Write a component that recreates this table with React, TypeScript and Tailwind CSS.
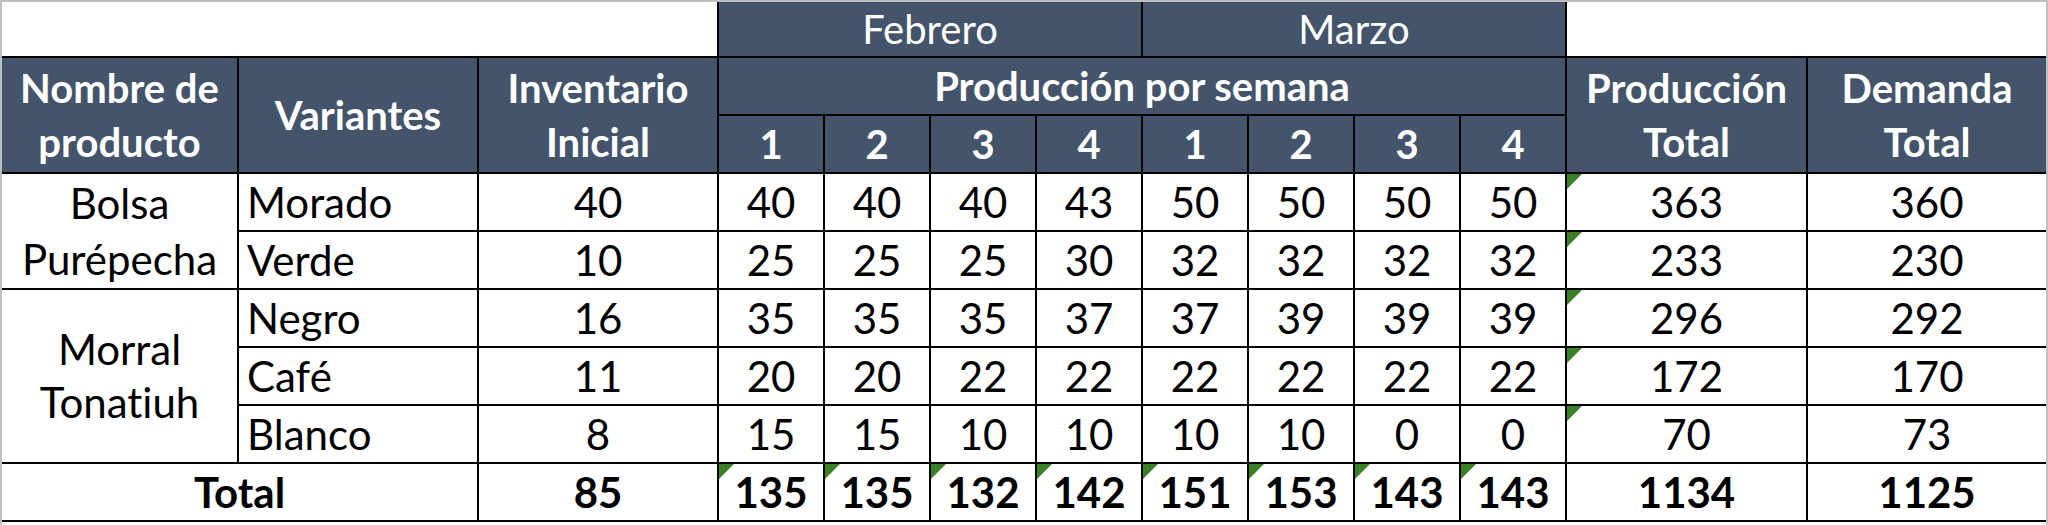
import type { ReactNode } from "react";

type Row = {
  variant: string;
  inv: number;
  weeks: number[];
  prod: number;
  demand: number;
};

const bolsa: Row[] = [
  { variant: "Morado", inv: 40, weeks: [40, 40, 40, 43, 50, 50, 50, 50], prod: 363, demand: 360 },
  { variant: "Verde", inv: 10, weeks: [25, 25, 25, 30, 32, 32, 32, 32], prod: 233, demand: 230 },
];

const morral: Row[] = [
  { variant: "Negro", inv: 16, weeks: [35, 35, 35, 37, 37, 39, 39, 39], prod: 296, demand: 292 },
  { variant: "Café", inv: 11, weeks: [20, 20, 22, 22, 22, 22, 22, 22], prod: 172, demand: 170 },
  { variant: "Blanco", inv: 8, weeks: [15, 15, 10, 10, 10, 10, 0, 0], prod: 70, demand: 73 },
];

const weekTotals = [135, 135, 132, 142, 151, 153, 143, 143];

function Flag() {
  return (
    <svg className="absolute left-0 top-0" width="15" height="15" viewBox="0 0 15 15">
      <polygon points="0,0 15,0 0,15" fill="#3b7f26" />
    </svg>
  );
}

function Head({ children, className = "" }: { children: ReactNode; className?: string }) {
  return (
    <div className={`flex items-center justify-center bg-[#44546a] text-center text-[40px] font-bold leading-[54px] text-white ${className}`}>
      {children}
    </div>
  );
}

function Cell({
  children,
  className = "",
  flag = false,
}: {
  children: ReactNode;
  className?: string;
  flag?: boolean;
}) {
  return (
    <div className={`relative flex items-center justify-center bg-white text-[42px] text-black ${className}`}>
      {flag && <Flag />}
      {children}
    </div>
  );
}

function DataRow({ row }: { row: Row }) {
  return (
    <>
      <Cell className="justify-start pl-[8px]">{row.variant}</Cell>
      <Cell>{row.inv}</Cell>
      {row.weeks.map((w, i) => (
        <Cell key={i}>{w}</Cell>
      ))}
      <Cell flag>{row.prod}</Cell>
      <Cell>{row.demand}</Cell>
    </>
  );
}

export default function App() {
  return (
    <div className="h-[525px] w-[2048px] overflow-hidden border-x-2 border-t-2 border-[#bfbfbf] bg-white font-['Lato',sans-serif] [font-variant-ligatures:none]">
      <div className="grid grid-cols-[235px_238px_238px_repeat(8,104px)_239px_238px] grid-rows-[54px_repeat(8,56px)] gap-[2px] bg-black pb-[2px]">
        {/* month row */}
        <div className="col-span-3 bg-white" />
        <Head className="col-span-4 font-normal">Febrero</Head>
        <Head className="col-span-4 font-normal">Marzo</Head>
        <div className="col-span-2 bg-white" />

        {/* header rows */}
        <Head className="row-span-2">
          <span>
            Nombre de
            <br />
            producto
          </span>
        </Head>
        <Head className="row-span-2">Variantes</Head>
        <Head className="row-span-2">
          <span>
            Inventario
            <br />
            Inicial
          </span>
        </Head>
        <Head className="col-span-8">Producción por semana</Head>
        <Head className="row-span-2">
          <span>
            Producción
            <br />
            Total
          </span>
        </Head>
        <Head className="row-span-2">
          <span>
            Demanda
            <br />
            Total
          </span>
        </Head>
        {[1, 2, 3, 4, 1, 2, 3, 4].map((n, i) => (
          <Head key={i}>{n}</Head>
        ))}

        {/* Bolsa Purépecha */}
        <Cell className="row-span-2 text-center leading-[56px]">
          <span>
            Bolsa
            <br />
            Purépecha
          </span>
        </Cell>
        {bolsa.map((r) => (
          <DataRow key={r.variant} row={r} />
        ))}

        {/* Morral Tonatiuh */}
        <Cell className="row-span-3 text-center leading-[53px]">
          <span>
            Morral
            <br />
            Tonatiuh
          </span>
        </Cell>
        {morral.map((r) => (
          <DataRow key={r.variant} row={r} />
        ))}

        {/* totals */}
        <Cell className="col-span-2 font-bold">Total</Cell>
        <Cell className="font-bold">85</Cell>
        {weekTotals.map((t, i) => (
          <Cell key={i} className="font-bold" flag>
            {t}
          </Cell>
        ))}
        <Cell className="font-bold">1134</Cell>
        <Cell className="font-bold">1125</Cell>
      </div>
    </div>
  );
}
